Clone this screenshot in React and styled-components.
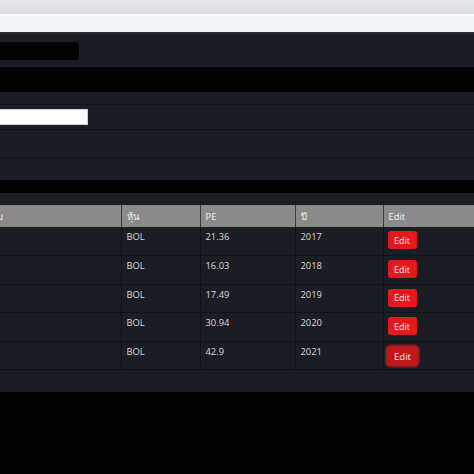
import React from 'react'
import styled, { createGlobalStyle } from 'styled-components'

const Global = createGlobalStyle`
  html, body { margin: 0; padding: 0; background: #000; overflow: hidden; }
  body { font-family: "Open Sans", "Noto Sans", sans-serif; }
`

const TabStrip = styled.div`
  height: 14px;
  background: linear-gradient(#e4e6ea, #dcdfe3);
  border-bottom: 2px solid #fff;
`

const AddressBar = styled.div`
  height: 16px;
  background: #f1f3f4;
  border-bottom: 2px solid #2a2c32;
`

const Page = styled.div`
  margin-left: -25px;
  width: calc(100% + 25px);
`

const Band = styled.div`
  height: ${p => p.h}px;
  background: ${p => (p.black ? '#000' : '#1b1d24')};
  border-bottom: ${p => (p.line ? '1px solid #121318' : 'none')};
  display: flex;
  align-items: center;
  box-sizing: border-box;
`

const SearchBox = styled.div`
  width: 104px;
  height: 18px;
  background: #030303;
  border-radius: 0 3px 3px 0;
  color: #ddd;
  font-size: 8px;
  line-height: 18px;
  padding-left: 20px;
  box-sizing: border-box;
`

const TextInput = styled.input`
  width: 113px;
  height: 16px;
  border: 1px solid #cfcfcf;
  background: #fff;
  padding: 0;
  margin: 0;
  box-sizing: border-box;
`

const Table = styled.table`
  width: 100%;
  border-collapse: collapse;
  table-layout: fixed;
  font-size: 9.4px;
  color: #d9d9d9;
`

const HeadCell = styled.th`
  height: 22px;
  background: #8a8a8a;
  color: #f0f0f0;
  font-weight: 400;
  text-align: left;
  padding: 0 5px;
  border-left: 1px solid #3a3b40;
  &:first-child { border-left: none; }
`

const Row = styled.tr`
  height: 28.6px;
  background: #1b1d24;
  border-bottom: 1px solid #111216;
`

const Cell = styled.td`
  vertical-align: top;
  padding: 4px 5px 0;
  line-height: 12px;
  border-left: 1px solid #111216;
  &:first-child { border-left: none; }
`

const EditButton = styled.button`
  font-family: inherit;
  font-size: 9px;
  color: #f3f3f3;
  background: ${p => (p.focused ? '#c3161b' : '#e3191e')};
  border: none;
  border-radius: 3px;
  width: 29px;
  height: 18px;
  padding: 0;
  margin: 0 0 0 -1px;
  box-shadow: ${p => (p.focused ? '0 0 0 2px rgba(170, 30, 34, 0.75)' : 'none')};
  margin-top: ${p => (p.focused ? '1px' : '0')};
  transform: ${p => (p.focused ? 'scale(1.05)' : 'none')};
`

const rows = [
  { pe: '21.36', year: '2017' },
  { pe: '16.03', year: '2018' },
  { pe: '17.49', year: '2019' },
  { pe: '30.94', year: '2020' },
  { pe: '42.9', year: '2021' },
]

export default function App() {
  return (
    <>
      <Global />
      <TabStrip />
      <AddressBar />
      <Page>
        <Band h={33}>
          <SearchBox>.</SearchBox>
        </Band>
        <Band h={25} black />
        <Band h={13} line />
        <Band h={25} line>
          <TextInput />
        </Band>
        <Band h={28} line />
        <Band h={22} />
        <Band h={13} black />
        <Band h={12} />
        <Table>
          <colgroup>
            <col style={{ width: 146 }} />
            <col style={{ width: 79 }} />
            <col style={{ width: 95 }} />
            <col style={{ width: 88 }} />
            <col />
          </colgroup>
          <thead>
            <tr>
              <HeadCell>ลำดับ</HeadCell>
              <HeadCell>หุ้น</HeadCell>
              <HeadCell>PE</HeadCell>
              <HeadCell>ปี</HeadCell>
              <HeadCell>Edit</HeadCell>
            </tr>
          </thead>
          <tbody>
            {rows.map((r, i) => (
              <Row key={r.year}>
                <Cell />
                <Cell>BOL</Cell>
                <Cell>{r.pe}</Cell>
                <Cell>{r.year}</Cell>
                <Cell>
                  <EditButton focused={i === rows.length - 1}>Edit</EditButton>
                </Cell>
              </Row>
            ))}
          </tbody>
        </Table>
        <Band h={22} />
      </Page>
    </>
  )
}
